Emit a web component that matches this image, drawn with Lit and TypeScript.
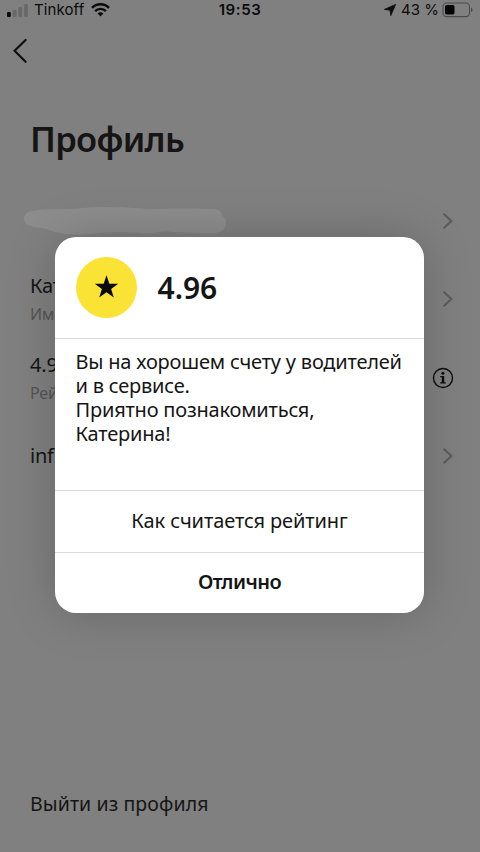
import { LitElement, html, css, svg, nothing } from "lit";
import { customElement } from "lit/decorators.js";

interface Row {
  title: string;
  note?: string;
  end: "chevron" | "info";
  hidden?: boolean;
}

const rows: Row[] = [
  { title: "", end: "chevron", hidden: true },
  { title: "Кат", note: "Им", end: "chevron" },
  { title: "4.9", note: "Рей", end: "info" },
  { title: "inf", end: "chevron" },
];

const chevron = html`<svg class="chevron" width="12" height="18" viewBox="0 0 12 18">
  <path d="M1.6 1.8 9.4 9 1.6 16.2" fill="none" stroke="#5c5c5c" stroke-width="2.1" />
</svg>`;

const info = html`<svg class="info" width="22" height="22" viewBox="0 0 22 22">
  <circle cx="11" cy="11" r="9.5" fill="none" stroke="#0d0d0d" stroke-width="1.4" />
  <circle cx="10.9" cy="6.3" r="1.5" fill="#0d0d0d" />
  <path d="M8.2 9h4v6.2h1.5v1.2H8.2v-1.2h1.6v-5H8.2z" fill="#0d0d0d" />
</svg>`;

const smudge = html`<svg class="smudge" width="204" height="28" viewBox="0 0 204 28">
  <path
    d="M8 4C22 1 42 3 60 1 78-1 98 0 126 2c22-1 44-1 66 0 5 2 6 5 6 7 4 2 4 5 4 8-1 5-4 8-10 9-12 1-26-1-42-1-12-2-18 2-30 1-16-1-30-1-46 0-14 2-30 2-38 0-8-1-10-4-18-5C5 20 0 17 0 12 0 8 3 5 8 4z"
    fill="#8d8d8d"
  />
</svg>`;

@customElement("app-root")
export class AppRoot extends LitElement {
  static styles = css`
    :host {
      display: block;
      position: relative;
      width: 480px;
      height: 852px;
      overflow: hidden;
      background: #808080;
      color: #151515;
      font-family: "Noto Sans", "Open Sans", sans-serif;
    }
    * { box-sizing: border-box; }
    svg { display: block; flex: none; }
    .page { display: flex; flex-direction: column; height: 100%; }
    .status {
      display: grid;
      grid-template-columns: 1fr auto 1fr;
      align-items: center;
      height: 20px;
      padding: 0 7px 0 7px;
      color: #0b0b0b;
      font: 15px/20px Inter, sans-serif;
    }
    .carrier, .power { display: flex; align-items: center; }
    .power { justify-content: flex-end; }
    .carrier span { margin: 0 7px 0 6px; letter-spacing: 0.1px; }
    .clock { font-weight: 600; letter-spacing: 0.6px; }
    .power span { margin: 0 3px 0 5px; }
    .nav { height: 62px; padding: 18px 12px 0; }
    .heading {
      margin: 0;
      padding-left: 30px;
      height: 100px;
      font-size: 34.5px;
      line-height: 114px;
      font-weight: 600;
      letter-spacing: -0.7px;
    }
    .row {
      display: flex;
      align-items: center;
      justify-content: space-between;
      height: 78.3px;
      padding: 0 26px 0 30px;
    }
    .row.wide { padding-left: 24px; }
    .label { font-size: 20px; line-height: 28px; letter-spacing: -0.2px; }
    .note { font-size: 16px; line-height: 29px; color: #555; letter-spacing: -0.2px; }
    .double { padding-top: 3px; }
    .logout { margin-top: auto; padding: 0 0 34px 30px; font-size: 19.5px; line-height: 28px; letter-spacing: 0.1px; }
    .dialog {
      position: absolute;
      left: 55px;
      top: 236.5px;
      width: 369px;
      height: 376px;
      display: flex;
      flex-direction: column;
      border-radius: 21px;
      background: #fff;
      overflow: hidden;
      box-shadow: 0 0 50px rgba(0, 0, 0, 0.2);
    }
    .score {
      display: flex;
      align-items: center;
      gap: 21px;
      height: 102.5px;
      padding-left: 20.5px;
      border-bottom: 1px solid #dcdcdc;
      font-size: 30px;
      font-weight: 600;
    }
    .message {
      height: 152px;
      padding: 11px 0 0 20.5px;
      font-size: 20px;
      line-height: 24px;
      letter-spacing: -0.2px;
      white-space: nowrap;
      border-bottom: 1px solid #dcdcdc;
    }
    .action {
      display: flex;
      align-items: center;
      justify-content: center;
      height: 60.5px;
      font: inherit;
      font-size: 20px;
      letter-spacing: -0.1px;
      color: inherit;
      background: none;
      border: 0;
      padding: 0 0 1px;
    }
    .action + .action { border-top: 1px solid #dcdcdc; }
    .main { font-weight: 600; letter-spacing: -0.6px; }
  `;

  render() {
    return html`
      <div class="page">
        <div class="status">
          <div class="carrier">
            <svg width="21" height="14" viewBox="0 0 21 14">
              <rect y="9" width="3.8" height="5" rx="1" fill="#0b0b0b" />
              ${[[5.7, 7], [11.4, 4], [17.1, 1]].map(
                ([x, y]) => svg`<rect x=${x} y=${y} width="3.8" height=${14 - y} rx="1" fill="#686868" />`,
              )}
            </svg>
            <span>Tinkoff</span>
            <svg width="19" height="14" viewBox="0 0 19 14">
              <g fill="none" stroke="#0b0b0b" stroke-width="2.4">
                <path d="M1 4.9C5.6.1 13.4.1 18 4.9" />
                <path d="M4.1 8.2c3-3.1 7.8-3.1 10.8 0" />
              </g>
              <path d="M6.6 10.5c1.6-1.6 4.2-1.6 5.8 0L9.5 13.6z" fill="#0b0b0b" />
            </svg>
          </div>
          <div class="clock">19:53</div>
          <div class="power">
            <svg width="12" height="12" viewBox="0 0 12 12">
              <path d="M11.6.4 6.8 11.6 6 6.2.4 5.4z" fill="#0b0b0b" stroke="#0b0b0b" stroke-width=".8" stroke-linejoin="round" />
            </svg>
            <span>43 %</span>
            <svg width="31" height="16" viewBox="0 0 31 16">
              <rect x="1" y="1" width="26.5" height="13.6" rx="3.6" fill="none" stroke="#4b4b4b" stroke-width="1.1" />
              <rect x="3" y="3" width="9.5" height="9.6" rx="1.8" fill="#050505" />
              <path d="M29 5.4c2 .9 2 3.9 0 4.8z" fill="#4b4b4b" />
            </svg>
          </div>
        </div>
        <div class="nav">
          <svg width="16" height="26" viewBox="0 0 16 26">
            <path d="M13.6 2 2.6 12.8 13.6 23.8" fill="none" stroke="#101010" stroke-width="2.2" stroke-linecap="round" />
          </svg>
        </div>
        <h1 class="heading">Профиль</h1>
        ${rows.map(
          (r) => html`<div class="row ${r.hidden ? "wide" : ""}">
            ${r.hidden
              ? smudge
              : html`<div class=${r.note ? "double" : ""}>
                  <div class="label">${r.title}</div>
                  ${r.note ? html`<div class="note">${r.note}</div>` : nothing}
                </div>`}
            ${r.end === "chevron" ? chevron : info}
          </div>`,
        )}
        <div class="logout">Выйти из профиля</div>
      </div>
      <div class="dialog">
        <div class="score">
          <svg width="61" height="61" viewBox="0 0 62 62">
            <circle cx="31" cy="31" r="31" fill="#fbe335" />
            <path d="M31 18.6l2.9 8.5h9l-7.2 5.4 2.7 8.6-7.4-5.2-7.4 5.2 2.7-8.6-7.2-5.4h9z" fill="#080808" />
          </svg>
          <span>4.96</span>
        </div>
        <div class="message">
          Вы на хорошем счету у водителей<br />и в сервисе.<br />Приятно познакомиться,<br />Катерина!
        </div>
        <button class="action how">Как считается рейтинг</button>
        <button class="action main">Отлично</button>
      </div>
    `;
  }
}
